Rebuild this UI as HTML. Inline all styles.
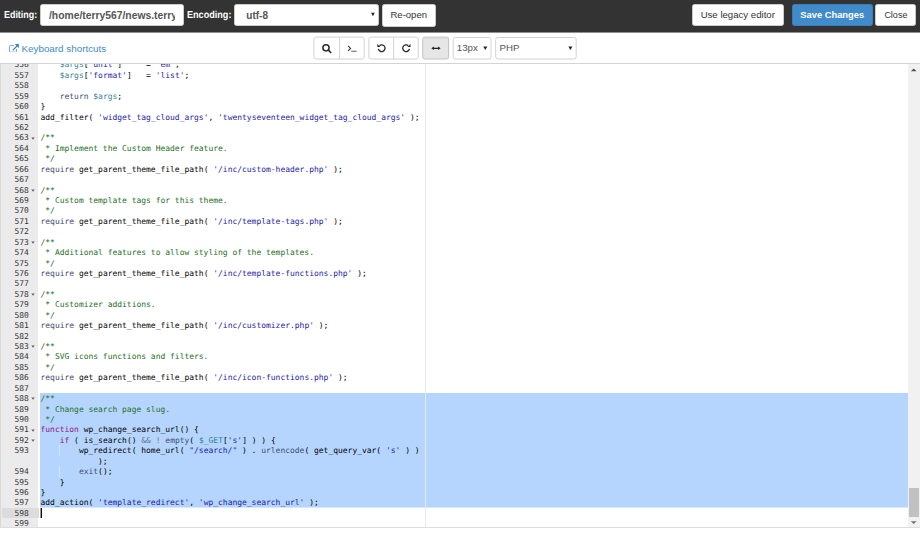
<!DOCTYPE html>
<html lang="en">
<head>
<meta charset="utf-8">
<title>cPanel File Manager - Code Editor</title>
<style>
html,body{margin:0;padding:0;}
body{width:920px;height:542px;overflow:hidden;background:#fff;position:relative;font-family:"Liberation Sans","DejaVu Sans",sans-serif;color:#333;}
*{box-sizing:border-box;}
#top{position:absolute;left:0;top:0;width:920px;height:33px;background:#333;border-bottom:1px solid #8f8f8f;}
#top .lbl{position:absolute;top:0;height:30px;line-height:30px;color:#fff;font-weight:bold;font-size:10.2px;white-space:nowrap;transform-origin:0 50%;}
.box{position:absolute;top:4px;height:22px;background:#fff;border:1px solid #ccc;border-radius:2.5px;white-space:nowrap;overflow:hidden;}
#path{left:39.5px;width:144px;padding:0;line-height:20px;font-weight:bold;font-size:10.34px;color:#555;}
#path span{position:absolute;left:8.5px;top:0.8px;width:125.6px;overflow:hidden;white-space:nowrap;}
#enc{left:234px;width:145.2px;padding-left:11.3px;line-height:21.6px;font-weight:bold;font-size:10px;color:#555;}
.caret{position:absolute;width:0;height:0;border-left:2.4px solid transparent;border-right:2.4px solid transparent;border-top:4.2px solid #222;}
.btn{position:absolute;top:4px;height:22px;line-height:20px;text-align:center;font-size:9.6px;color:#333;background:#fff;border:1px solid #ccc;border-radius:2.5px;white-space:nowrap;}
#save{background:#428bca;border-color:#357ebd;color:#fff;font-weight:bold;}
#bar{position:absolute;left:0;top:33px;width:920px;height:30px;background:#fff;}
#kb{position:absolute;left:9px;top:1px;height:30px;line-height:30px;font-size:9.84px;color:#428bca;white-space:nowrap;text-decoration:none;}
#kb svg{position:absolute;left:0;top:9.5px;}
#kb span{position:absolute;left:12.5px;top:0;}
#tbs{position:absolute;left:0;top:0;}
.st{position:absolute;top:4px;height:22px;line-height:22px;font-size:9.7px;color:#555;white-space:nowrap;}
#ed{position:absolute;left:0;top:63px;width:920px;height:465px;overflow:hidden;background:#fff;font-family:"DejaVu Sans Mono", "Liberation Mono", monospace;font-size:7.985px;line-height:10.43px;}
#gut{position:absolute;left:0;top:0;width:37.5px;border-left:1px solid #d9d9d9;height:465px;background:#ebebeb;color:#333;}
.gl{position:absolute;left:-1px;width:37.5px;height:10.43px;white-space:pre;}
.gl .n{position:absolute;right:8.7px;top:0;}
.gl .fa{position:absolute;left:31.3px;top:3.2px;width:4px;height:3px;}
.gl .fa svg{position:absolute;left:0;top:0;}
#selbg{position:absolute;left:40px;top:330px;width:868px;height:114px;background:#b5d5ff;}
#selbg2{position:absolute;left:40px;top:444px;width:868px;height:1px;background:#d6e7ff;}
#gact{position:absolute;left:1px;top:445px;width:36.5px;height:10px;background:#dcdcdc;}
#edtop{position:absolute;left:0;top:0;width:920px;height:1px;background:#d4d4d4;z-index:5}
#edbot{position:absolute;left:0;top:464px;width:920px;height:1px;background:#ddd;z-index:5}
#pm{position:absolute;left:424.5px;top:0;width:1px;height:465px;background:#e8e8e8;}
.cl{position:absolute;left:40.5px;height:10.43px;white-space:pre;color:#000;}
.s{color:#1a1aa6}.k{color:#930f80}.f{color:#3c4c72}.v{color:#318495}.c{color:#236e24}.o{color:#687687}
#cur{position:absolute;left:39px;top:445px;}
.ig{position:absolute;left:59px;width:1px;height:10.4px;background:#d4e5fc;}
#sb{position:absolute;left:908px;top:0;width:12px;height:465px;background:#f1f1f1;}
#sb .thumb{position:absolute;left:1px;top:425px;width:10px;height:29px;background:#c1c1c1;}
#sb svg{position:absolute;left:0;}
</style>
</head>
<body>
<div id="top">
  <div class="lbl" style="left:3.6px;transform:scaleX(0.875) rotate(0.03deg)">Editing:</div>
  <div class="box" id="path"><span>/home/terry567/news.terry567.com/wp-content/themes/child/functions.php</span></div>
  <div class="lbl" style="left:186.6px;transform:scaleX(0.892) rotate(0.03deg)">Encoding:</div>
  <div class="box" id="enc">utf-8<svg width="6" height="6" viewBox="0 0 6 6" style="position:absolute;left:135px;top:7px"><path d="M1.100 0.700H4.700L2.900 4.300z" fill="#222"/></svg></div>
  <div class="btn" style="left:381.5px;width:54.5px;font-size:9.52px;height:22.5px;line-height:20px">Re-open</div>
  <div class="btn" style="left:691.5px;width:92.5px;font-size:9.62px">Use legacy editor</div>
  <div class="btn" id="save" style="left:791.5px;width:81.5px;font-size:9.33px">Save Changes</div>
  <div class="btn" style="left:875.3px;width:41.2px;font-size:9px">Close</div>
</div>
<div id="bar">
  <a id="kb"><svg width="10" height="8.500" viewBox="0 0 20 17"><path d="M15 10v4.500a1.700 1.700 0 0 1-1.700 1.700h-10.600a1.700 1.700 0 0 1-1.700-1.700v-9.800a1.700 1.700 0 0 1 1.700-1.700h7.300" fill="none" stroke="#5a9bd3" stroke-width="1.700"/><path d="M11.500 0.200h8.300v8.300z" fill="#3a84c6"/><path d="M8.300 11.700L16.500 3.500" stroke="#3a84c6" stroke-width="2.600" stroke-linecap="round"/></svg><span>Keyboard shortcuts</span></a>
  <svg id="tbs" width="920" height="30" viewBox="0 0 920 30"><rect x="313.90" y="4.10" width="50.30" height="21.90" rx="2.10" fill="#fff" stroke="#d2d2d2"/><path d="M339.60 4.10V26.00" stroke="#d2d2d2" fill="none"/><rect x="368.90" y="4.10" width="49.40" height="21.90" rx="2.10" fill="#fff" stroke="#d2d2d2"/><path d="M393.70 4.10V26.00" stroke="#d2d2d2" fill="none"/><rect x="422.70" y="4.10" width="25.90" height="21.90" rx="2.10" fill="#e6e6e6" stroke="#c2c2c2"/><rect x="423.20" y="4.60" width="24.90" height="1.20" fill="#d9d9d9"/><rect x="453.20" y="4.50" width="37.80" height="21.50" rx="2.10" fill="#fff" stroke="#d2d2d2"/><rect x="495.70" y="4.50" width="80.50" height="21.50" rx="2.10" fill="#fff" stroke="#d2d2d2"/><circle cx="326.00" cy="14.80" r="3.10" fill="none" stroke="#2b2b2b" stroke-width="1.50"/><path d="M328.40 17.20L330.70 19.50" stroke="#2b2b2b" stroke-width="1.70" stroke-linecap="round"/><path d="M348.10 12.90L350.60 15.40L348.10 17.90" fill="none" stroke="#333" stroke-width="1.05"/><path d="M351.20 18.30H356.60" stroke="#777" stroke-width="1.20"/><path d="M379.55 12.63A3.35 3.35 0 1 1 378.40 15.78" fill="none" stroke="#2b2b2b" stroke-width="1.35"/><path d="M377.30 10.90V14.10H380.50z" fill="#2b2b2b"/><path d="M408.25 12.63A3.35 3.35 0 1 0 409.40 15.78" fill="none" stroke="#2b2b2b" stroke-width="1.35"/><path d="M410.50 10.90V14.10H407.30z" fill="#2b2b2b"/><path d="M431.30 15.30L433.90 13.60V14.70H438.00V13.60L440.60 15.30L438.00 17.00V15.90H433.90V17.00z" fill="#222"/><path d="M483.30 13.40H487.30L485.30 17.00z" fill="#222"/><path d="M568.40 13.40H572.40L570.40 17.00z" fill="#222"/></svg>
  <div class="st" style="left:456.8px">13px</div><div class="st" style="left:499.6px">PHP</div>
</div>
<div id="ed">
  <div id="edtop"></div><div id="edbot"></div>
  <div id="selbg"></div><div id="selbg2"></div>
  <div id="pm"></div>
  <div class="ig" style="top:382.3px"></div><div class="ig" style="top:403.2px"></div>
  <div id="gut">
<div id="gact"></div>
<div class="gl" style="top:-2.63px"><span class="n">556</span></div>
<div class="gl" style="top:7.80px"><span class="n">557</span></div>
<div class="gl" style="top:18.23px"><span class="n">558</span></div>
<div class="gl" style="top:28.66px"><span class="n">559</span></div>
<div class="gl" style="top:39.09px"><span class="n">560</span></div>
<div class="gl" style="top:49.52px"><span class="n">561</span></div>
<div class="gl" style="top:59.95px"><span class="n">562</span></div>
<div class="gl" style="top:70.38px"><span class="n">563</span><i class="fa"><svg width="4" height="3" viewBox="0 0 4 3"><path d="M0.300 0.400H3.700L2 2.700z" fill="#5c5c5c"/></svg></i></div>
<div class="gl" style="top:80.81px"><span class="n">564</span></div>
<div class="gl" style="top:91.24px"><span class="n">565</span></div>
<div class="gl" style="top:101.67px"><span class="n">566</span></div>
<div class="gl" style="top:112.10px"><span class="n">567</span></div>
<div class="gl" style="top:122.53px"><span class="n">568</span><i class="fa"><svg width="4" height="3" viewBox="0 0 4 3"><path d="M0.300 0.400H3.700L2 2.700z" fill="#5c5c5c"/></svg></i></div>
<div class="gl" style="top:132.96px"><span class="n">569</span></div>
<div class="gl" style="top:143.39px"><span class="n">570</span></div>
<div class="gl" style="top:153.82px"><span class="n">571</span></div>
<div class="gl" style="top:164.25px"><span class="n">572</span></div>
<div class="gl" style="top:174.68px"><span class="n">573</span><i class="fa"><svg width="4" height="3" viewBox="0 0 4 3"><path d="M0.300 0.400H3.700L2 2.700z" fill="#5c5c5c"/></svg></i></div>
<div class="gl" style="top:185.11px"><span class="n">574</span></div>
<div class="gl" style="top:195.54px"><span class="n">575</span></div>
<div class="gl" style="top:205.97px"><span class="n">576</span></div>
<div class="gl" style="top:216.40px"><span class="n">577</span></div>
<div class="gl" style="top:226.83px"><span class="n">578</span><i class="fa"><svg width="4" height="3" viewBox="0 0 4 3"><path d="M0.300 0.400H3.700L2 2.700z" fill="#5c5c5c"/></svg></i></div>
<div class="gl" style="top:237.26px"><span class="n">579</span></div>
<div class="gl" style="top:247.69px"><span class="n">580</span></div>
<div class="gl" style="top:258.12px"><span class="n">581</span></div>
<div class="gl" style="top:268.55px"><span class="n">582</span></div>
<div class="gl" style="top:278.98px"><span class="n">583</span><i class="fa"><svg width="4" height="3" viewBox="0 0 4 3"><path d="M0.300 0.400H3.700L2 2.700z" fill="#5c5c5c"/></svg></i></div>
<div class="gl" style="top:289.41px"><span class="n">584</span></div>
<div class="gl" style="top:299.84px"><span class="n">585</span></div>
<div class="gl" style="top:310.27px"><span class="n">586</span></div>
<div class="gl" style="top:320.70px"><span class="n">587</span></div>
<div class="gl" style="top:331.13px"><span class="n">588</span><i class="fa"><svg width="4" height="3" viewBox="0 0 4 3"><path d="M0.300 0.400H3.700L2 2.700z" fill="#5c5c5c"/></svg></i></div>
<div class="gl" style="top:341.56px"><span class="n">589</span></div>
<div class="gl" style="top:351.99px"><span class="n">590</span></div>
<div class="gl" style="top:362.42px"><span class="n">591</span><i class="fa"><svg width="4" height="3" viewBox="0 0 4 3"><path d="M0.300 0.400H3.700L2 2.700z" fill="#5c5c5c"/></svg></i></div>
<div class="gl" style="top:372.85px"><span class="n">592</span><i class="fa"><svg width="4" height="3" viewBox="0 0 4 3"><path d="M0.300 0.400H3.700L2 2.700z" fill="#5c5c5c"/></svg></i></div>
<div class="gl" style="top:383.28px"><span class="n">593</span></div>
<div class="gl" style="top:404.14px"><span class="n">594</span></div>
<div class="gl" style="top:414.57px"><span class="n">595</span></div>
<div class="gl" style="top:425.00px"><span class="n">596</span></div>
<div class="gl" style="top:435.43px"><span class="n">597</span></div>
<div class="gl" style="top:445.86px"><span class="n">598</span></div>
<div class="gl" style="top:456.29px"><span class="n">599</span></div>
  </div>
  <div id="code">
<div class="cl" style="top:-2.63px">    <span class="v">$args</span>[<span class="s">'unit'</span>]     = <span class="s">'em'</span>;</div>
<div class="cl" style="top:7.80px">    <span class="v">$args</span>[<span class="s">'format'</span>]   = <span class="s">'list'</span>;</div>
<div class="cl" style="top:28.66px">    <span class="f">return</span> <span class="v">$args</span>;</div>
<div class="cl" style="top:39.09px">}</div>
<div class="cl" style="top:49.52px">add_filter( <span class="s">'widget_tag_cloud_args'</span>, <span class="s">'twentyseventeen_widget_tag_cloud_args'</span> );</div>
<div class="cl" style="top:70.38px"><span class="c">/**</span></div>
<div class="cl" style="top:80.81px"><span class="c"> * Implement the Custom Header feature.</span></div>
<div class="cl" style="top:91.24px"><span class="c"> */</span></div>
<div class="cl" style="top:101.67px"><span class="f">require</span> get_parent_theme_file_path( <span class="s">'/inc/custom-header.php'</span> );</div>
<div class="cl" style="top:122.53px"><span class="c">/**</span></div>
<div class="cl" style="top:132.96px"><span class="c"> * Custom template tags for this theme.</span></div>
<div class="cl" style="top:143.39px"><span class="c"> */</span></div>
<div class="cl" style="top:153.82px"><span class="f">require</span> get_parent_theme_file_path( <span class="s">'/inc/template-tags.php'</span> );</div>
<div class="cl" style="top:174.68px"><span class="c">/**</span></div>
<div class="cl" style="top:185.11px"><span class="c"> * Additional features to allow styling of the templates.</span></div>
<div class="cl" style="top:195.54px"><span class="c"> */</span></div>
<div class="cl" style="top:205.97px"><span class="f">require</span> get_parent_theme_file_path( <span class="s">'/inc/template-functions.php'</span> );</div>
<div class="cl" style="top:226.83px"><span class="c">/**</span></div>
<div class="cl" style="top:237.26px"><span class="c"> * Customizer additions.</span></div>
<div class="cl" style="top:247.69px"><span class="c"> */</span></div>
<div class="cl" style="top:258.12px"><span class="f">require</span> get_parent_theme_file_path( <span class="s">'/inc/customizer.php'</span> );</div>
<div class="cl" style="top:278.98px"><span class="c">/**</span></div>
<div class="cl" style="top:289.41px"><span class="c"> * SVG icons functions and filters.</span></div>
<div class="cl" style="top:299.84px"><span class="c"> */</span></div>
<div class="cl" style="top:310.27px"><span class="f">require</span> get_parent_theme_file_path( <span class="s">'/inc/icon-functions.php'</span> );</div>
<div class="cl" style="top:331.13px"><span class="c">/**</span></div>
<div class="cl" style="top:341.56px"><span class="c"> * Change search page slug.</span></div>
<div class="cl" style="top:351.99px"><span class="c"> */</span></div>
<div class="cl" style="top:362.42px"><span class="k">function</span> wp_change_search_url() {</div>
<div class="cl" style="top:372.85px">    <span class="k">if</span> ( is_search() <span class="o">&amp;&amp;</span> <span class="o">!</span> <span class="f">empty</span>( <span class="v">$_GET</span>[<span class="s">'s'</span>] ) ) {</div>
<div class="cl" style="top:383.28px">        wp_redirect( home_url( <span class="s">"/search/"</span> ) . <span class="f">urlencode</span>( get_query_var( <span class="s">'s'</span> ) )</div>
<div class="cl" style="top:393.71px">            );</div>
<div class="cl" style="top:404.14px">        <span class="f">exit</span>();</div>
<div class="cl" style="top:414.57px">    }</div>
<div class="cl" style="top:425.00px">}</div>
<div class="cl" style="top:435.43px">add_action( <span class="s">'template_redirect'</span>, <span class="s">'wp_change_search_url'</span> );</div>
  </div>
  <svg id="cur" width="5" height="10" viewBox="0 0 5 10"><rect x="1.600" y="0" width="1.350" height="10" fill="#000"/></svg>
  <div id="sb"><svg width="12" height="12" viewBox="0 0 12 12" style="top:0"><path d="M2.800 8.300L5.700 5.500L8.600 8.300z" fill="#505050"/></svg><div class="thumb"></div><svg width="12" height="12" viewBox="0 0 12 12" style="top:453px"><path d="M2.800 5.300L5.700 8.100L8.600 5.300z" fill="#707070"/></svg></div>
</div>
</body>
</html>
